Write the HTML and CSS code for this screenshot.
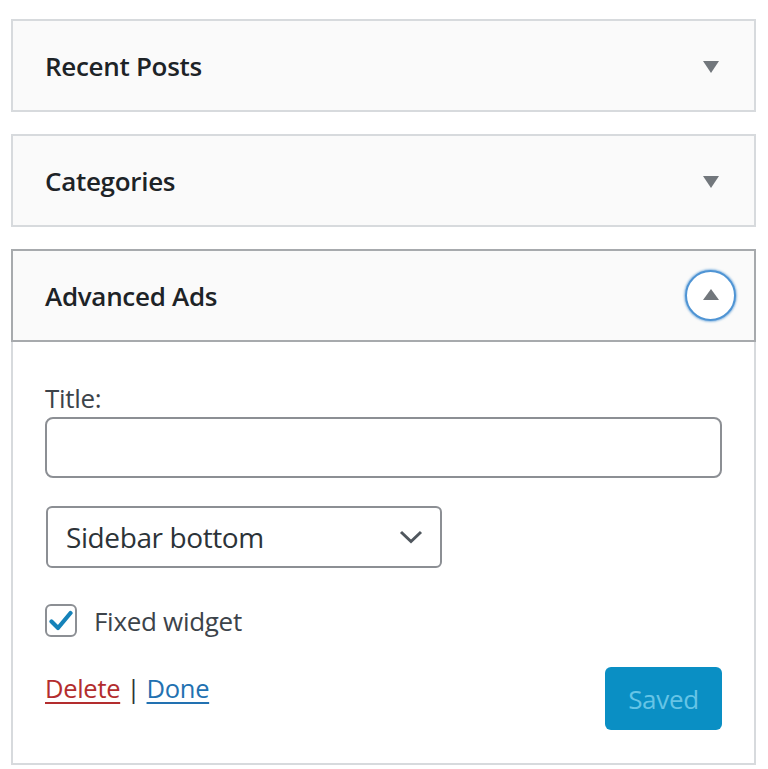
FILE: index.html
```html
<!DOCTYPE html>
<html lang="en">
<head>
<meta charset="utf-8">
<link rel="stylesheet" href="styles.css">
</head>
<body>
<div class="sidebar">
  <div class="widget">
    <div class="widget-top">
      <h3 class="widget-title">Recent Posts</h3>
      <span class="toggle"><span class="arrow-down"></span></span>
    </div>
  </div>
  <div class="widget">
    <div class="widget-top">
      <h3 class="widget-title">Categories</h3>
      <span class="toggle"><span class="arrow-down"></span></span>
    </div>
  </div>
  <div class="widget open">
    <div class="widget-top">
      <h3 class="widget-title">Advanced Ads</h3>
      <span class="toggle focus"><span class="arrow-up"></span></span>
    </div>
    <div class="widget-inside">
      <label class="field-label">Title:</label>
      <div class="text-input"></div>
      <div class="select">
        <span class="select-text">Sidebar bottom</span>
        <svg class="chevron" width="24" height="14" viewBox="0 0 24 14"><path d="M2 2 L12 11.5 L22 2" fill="none" stroke="#50575e" stroke-width="3"/></svg>
      </div>
      <div class="check-row">
        <span class="checkbox">
          <svg width="24" height="22" viewBox="0 0 24 22"><path d="M2.5 11.5 L9 18 L21.5 3" fill="none" stroke="#1582b9" stroke-width="4.2" stroke-linecap="round" stroke-linejoin="round"/></svg>
        </span>
        <span class="check-label">Fixed widget</span>
      </div>
      <div class="actions">
        <div class="links"><a class="delete">Delete</a> | <a class="done">Done</a></div>
        <span class="saved">Saved</span>
      </div>
    </div>
  </div>
</div>
</body>
</html>
```

FILE: styles.css
```css
html, body {
  margin: 0;
  padding: 0;
  background: #ffffff;
}
body {
  font-family: "Open Sans", "Noto Sans", sans-serif;
  color: #32373c;
}
.sidebar {
  padding: 19px 12px 0 11px;
  width: 745px;
}
.widget {
  margin-bottom: 22px;
  border: 2px solid #d7dadd;
  background: #fafafa;
}
.widget.open {
  border: none;
  background: #fff;
}
.widget-top {
  height: 89px;
  display: flex;
  align-items: center;
  justify-content: space-between;
  padding: 0 18px 0 32px;
}
.open .widget-top {
  border: 2px solid #a7aaad;
  background: #fafafa;
}
.widget-title {
  margin: 0;
  font-size: 26px;
  line-height: 34px;
  font-weight: 600;
  color: #1d2327;
  letter-spacing: -0.3px;
}
.toggle {
  width: 51px;
  height: 51px;
  border-radius: 50%;
  display: flex;
  align-items: center;
  justify-content: center;
  box-sizing: border-box;
}
.toggle.focus {
  border: 2px solid #4f94d4;
  box-shadow: 0 0 2px 1px rgba(79, 148, 212, 0.6);
  background: #fff;
}
.arrow-down {
  width: 0;
  height: 0;
  border-left: 8px solid transparent;
  border-right: 8px solid transparent;
  border-top: 12px solid #72777c;
  margin-top: 2px;
}
.arrow-up {
  width: 0;
  height: 0;
  border-left: 8.5px solid transparent;
  border-right: 8.5px solid transparent;
  border-bottom: 11px solid #72777c;
  margin-top: -2px;
}
.widget-inside {
  border: 2px solid #d7dadd;
  border-top: none;
  padding: 41px 32px 33px 32px;
}
.field-label {
  display: block;
  font-size: 26px;
  line-height: 30px;
  color: #3c434a;
  letter-spacing: -0.3px;
}
.text-input {
  margin-top: 4px;
  height: 61px;
  box-sizing: border-box;
  border: 2px solid #8c8f94;
  border-radius: 8px;
  background: #fff;
}
.select {
  margin-top: 28px;
  margin-left: 1px;
  width: 396px;
  height: 62px;
  box-sizing: border-box;
  border: 2px solid #8c8f94;
  border-radius: 6px;
  display: flex;
  align-items: center;
  justify-content: space-between;
  padding: 0 17px 0 18px;
}
.select-text {
  font-size: 28px;
  line-height: 34px;
  color: #2c3338;
  letter-spacing: -0.4px;
}
.chevron {
  display: block;
}
.check-row {
  margin-top: 36px;
  display: flex;
  align-items: center;
  height: 33px;
}
.checkbox {
  width: 32px;
  height: 33px;
  box-sizing: border-box;
  border: 2px solid #8c8f94;
  border-radius: 6px;
  display: flex;
  align-items: center;
  justify-content: center;
  background: #fff;
}
.checkbox svg {
  display: block;
}
.check-label {
  margin-left: 17px;
  font-size: 26px;
  line-height: 32px;
  color: #3c434a;
  letter-spacing: -0.3px;
}
.actions {
  margin-top: 30px;
  display: flex;
  justify-content: space-between;
  align-items: flex-start;
}
.links {
  font-size: 25.5px;
  line-height: 32px;
  color: #2c3338;
  margin-top: 5px;
  letter-spacing: -0.3px;
}
.links a {
  text-decoration: underline;
  text-decoration-thickness: 2px;
  text-underline-offset: 4px;
}
.delete {
  color: #b32d2e;
}
.done {
  color: #2271b1;
}
.saved {
  width: 117px;
  height: 63px;
  box-sizing: border-box;
  background: #0a8fc4;
  border-radius: 6px;
  color: #66c4e6;
  font-size: 26px;
  display: flex;
  align-items: center;
  justify-content: center;
  letter-spacing: -0.3px;
}
```
